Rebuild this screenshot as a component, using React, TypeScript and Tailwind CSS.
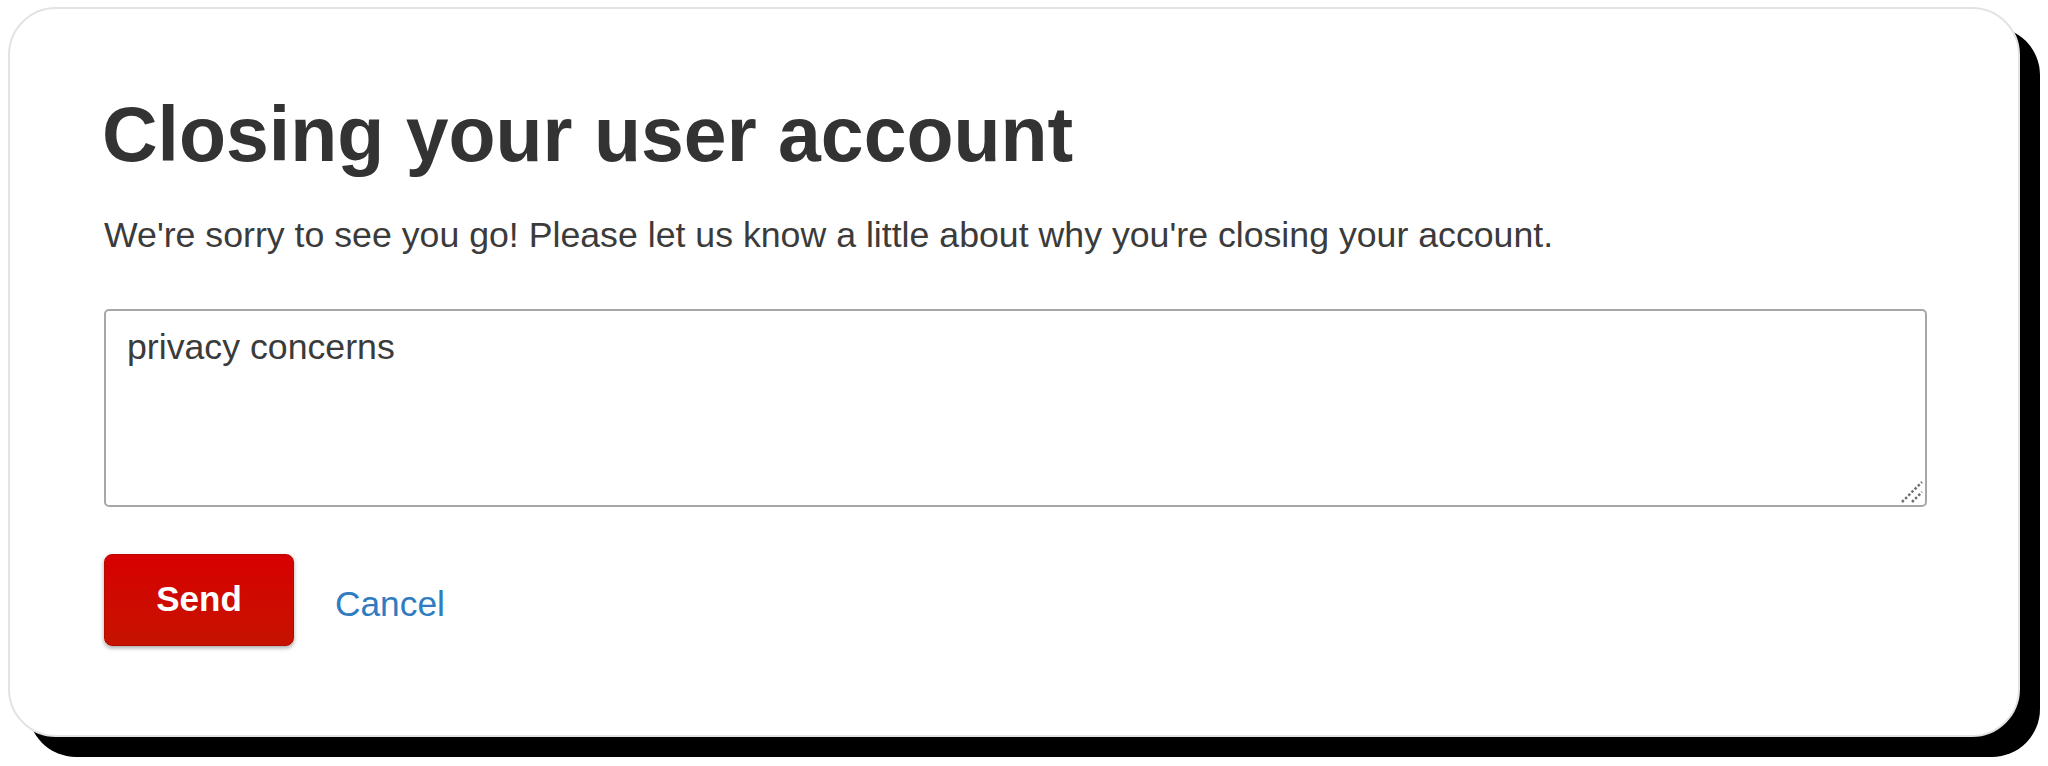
import React from 'react';

function ResizeGrip() {
  return (
    <svg
      className="pointer-events-none absolute bottom-[3px] right-[3px]"
      width="24"
      height="24"
      viewBox="0 0 24 24"
    >
      <line x1="2" y1="22" x2="22" y2="2" stroke="#6e6e6e" strokeWidth="2.5" strokeDasharray="2.5 2" />
      <line x1="12" y1="22" x2="22" y2="12" stroke="#6e6e6e" strokeWidth="2.5" strokeDasharray="2.5 2" />
    </svg>
  );
}

export default function App() {
  return (
    <div className="min-h-[766px] bg-white pt-[7px] pl-2 font-['Liberation_Sans',Arial,sans-serif]">
      <div className="flex h-[730px] w-[2012px] flex-col rounded-[48px] border-2 border-[#e3e3e3] bg-white pl-[94px] pr-[91px] pt-[87px] shadow-[20px_20px_0_0_#000]">
        <h1 className="-ml-[2px] text-[77px] font-bold leading-[77px] text-[#333333]">
          Closing your user account
        </h1>
        <p className="mt-[44px] text-[35.7px] leading-[36px] text-[#3b3b3b]">
          We're sorry to see you go! Please let us know a little about why you're closing your account.
        </p>
        <div className="relative mt-[56px]">
          <textarea
            className="block h-[198px] w-full resize-none rounded-[5px] border-2 border-[#a7a7a7] pl-[21px] pt-[18px] text-[35.7px] leading-[36px] text-[#3b3b3b] outline-none"
            defaultValue="privacy concerns"
          />
          <ResizeGrip />
        </div>
        <div className="mt-[47px] flex items-center gap-[41px]">
          <button className="flex h-[92px] w-[190px] items-center justify-center rounded-[8px] border border-[#b40a00] bg-gradient-to-b from-[#d70000] to-[#c61200] pb-[4px] text-[35px] font-bold leading-[35px] text-white shadow-[0_2px_4px_rgba(0,0,0,0.35)]">
            Send
          </button>
          <a href="#" className="mt-[6px] text-[35.3px] leading-[35px] text-[#2f7cc0]">
            Cancel
          </a>
        </div>
      </div>
    </div>
  );
}
